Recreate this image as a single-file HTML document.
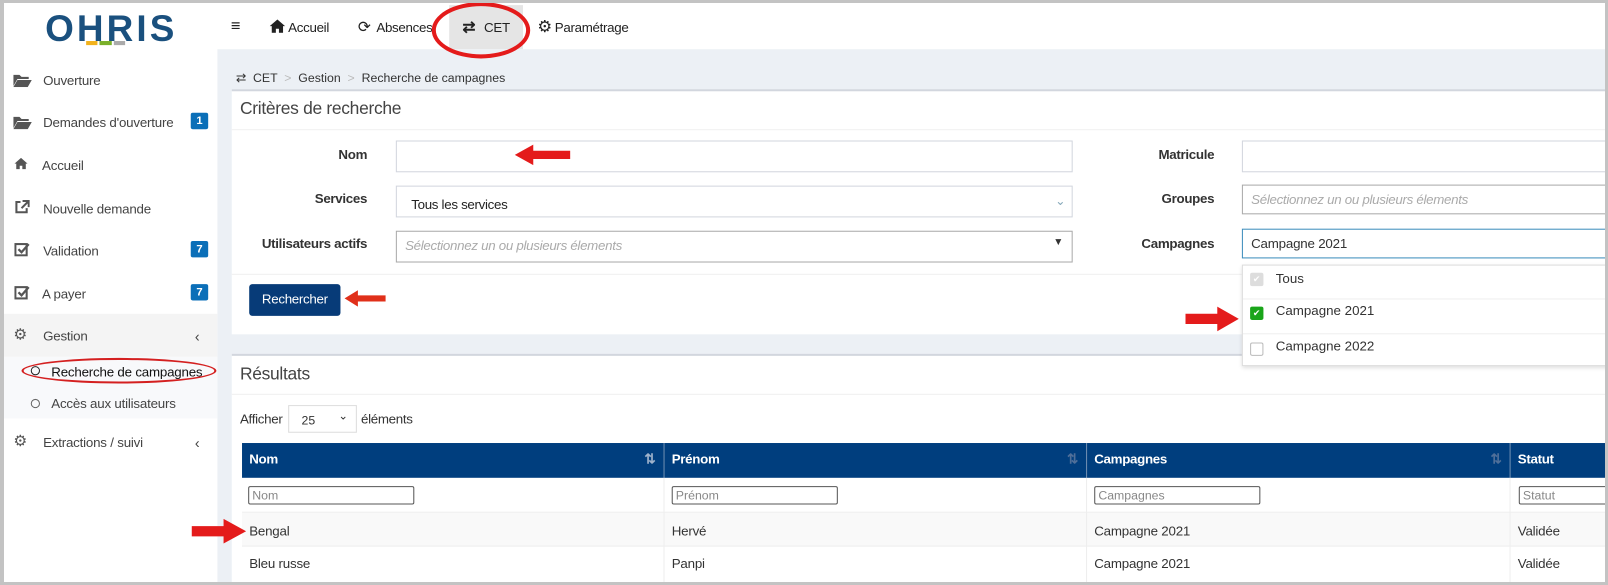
<!DOCTYPE html>
<html><head><meta charset="utf-8"><style>
*{box-sizing:border-box;margin:0;padding:0}
body{width:1608px;height:585px;overflow:hidden;background:#fff;font-family:"Liberation Sans",Arial,sans-serif;font-size:13px;color:#333;position:relative}
#w{position:absolute;left:0;top:0;width:1568px;height:570px;transform:scale(1.02551);transform-origin:0 0;overflow:hidden}
.a{position:absolute}
.frame{position:absolute;left:0;top:0;width:1608px;height:585px;border:3px solid #c3c3c3;border-left-width:4px;z-index:50;pointer-events:none}
.nav{font-size:13px;color:#222;letter-spacing:-.3px}
.side{font-size:13px;color:#444;letter-spacing:-.2px}
.badge{position:absolute;left:186px;width:17px;height:16px;background:#0b6fb8;color:#fff;font-weight:bold;font-size:11px;text-align:center;line-height:16px;border-radius:2px}
.lbl{position:absolute;font-weight:bold;font-size:13px;color:#333;text-align:right;letter-spacing:-.3px}
.inp{position:absolute;border:1px solid #d2d6de;background:#fff}
.ph{color:#aaa;font-style:italic;font-size:13px;letter-spacing:-.3px}
.th{position:absolute;top:432px;height:34px;background:#003e7e;color:#fff;font-weight:bold;line-height:32px;padding-left:7px;border-right:1px solid #6b8bb0;letter-spacing:-.3px}
.fi{position:absolute;top:474px;height:18px;border:1px solid #555;border-radius:2px;background:#fff;color:#888;font-size:12px;padding-left:3px;line-height:16px}
.td{position:absolute;letter-spacing:-.2px}
svg{display:block}
</style></head><body>
<div class="frame"></div>
<div id="w">
<!-- top bar -->
<div class="a" style="left:44px;top:7px;font-size:36px;font-weight:bold;color:#1a507e;letter-spacing:3px">OHRIS</div>
<div class="a" style="left:84px;top:40px;width:11px;height:4px;background:#f2b21b"></div>
<div class="a" style="left:97px;top:40px;width:12px;height:4px;background:#7ab02a"></div>
<div class="a" style="left:111px;top:40px;width:11px;height:4px;background:#aaa"></div>
<div class="a nav" style="left:225px;top:17px;font-size:16px;font-weight:bold">≡</div>
<svg class="a" style="left:263px;top:19px" width="15" height="13" viewBox="0 0 15 13"><path d="M7.5 0L0 6.5h2V13h4V9h3v4h4V6.5h2z" fill="#222"/></svg>
<div class="a nav" style="left:281px;top:19px">Accueil</div>
<div class="a nav" style="left:349px;top:17px;font-size:15px">⟳</div>
<div class="a nav" style="left:367px;top:19px">Absences</div>
<div class="a" style="left:438px;top:5px;width:72px;height:43px;background:#e5e5e5"></div>
<div class="a nav" style="left:451px;top:17px;font-size:15px;font-weight:bold">⇄</div>
<div class="a nav" style="left:472px;top:19px">CET</div>
<div class="a nav" style="left:524px;top:16px;font-size:16px">⚙</div>
<div class="a nav" style="left:541px;top:19px">Paramétrage</div>
<div class="a" style="left:421px;top:2px;width:96px;height:55px;border:4px solid #e41b1b;border-radius:50%;z-index:10"></div>

<div class="a" style="left:212px;top:48px;width:1396px;height:537px;background:#ecf0f5"></div>

<!-- sidebar -->
<div class="a" style="left:0;top:306px;width:212px;height:42px;background:#f4f4f4"></div>
<div class="a" style="left:0;top:348px;width:212px;height:60px;background:#f8f9fb"></div>
<svg class="a" style="left:13px;top:72px" width="18" height="13" viewBox="0 0 18 13"><path d="M0 1h6l2 2h7v2H4L0 12z M4 6h14l-4 7H0z" fill="#555"/></svg>
<div class="a side" style="left:42px;top:71px">Ouverture</div>
<svg class="a" style="left:13px;top:113px" width="18" height="13" viewBox="0 0 18 13"><path d="M0 1h6l2 2h7v2H4L0 12z M4 6h14l-4 7H0z" fill="#555"/></svg>
<div class="a side" style="left:42px;top:112px">Demandes d'ouverture</div><div class="badge" style="top:110px">1</div>
<svg class="a" style="left:14px;top:154px" width="13" height="11" viewBox="0 0 15 13"><path d="M7.5 0L0 6.5h2V13h4V9h3v4h4V6.5h2z" fill="#555"/></svg>
<div class="a side" style="left:41px;top:154px">Accueil</div>
<svg class="a" style="left:14px;top:195px" width="15" height="14" viewBox="0 0 15 14"><path d="M6 2H2v10h10V8" stroke="#555" stroke-width="2" fill="none"/><path d="M8 1h6v6M14 1L7 8" stroke="#555" stroke-width="2" fill="none"/></svg>
<div class="a side" style="left:42px;top:196px">Nouvelle demande</div>
<svg class="a" style="left:14px;top:236px" width="15" height="14" viewBox="0 0 15 14"><rect x="1" y="2" width="11" height="11" stroke="#555" stroke-width="2" fill="none"/><path d="M4 7l3 3 7-8" stroke="#555" stroke-width="2.2" fill="none"/></svg>
<div class="a side" style="left:42px;top:237px">Validation</div><div class="badge" style="top:235px">7</div>
<svg class="a" style="left:14px;top:278px" width="15" height="14" viewBox="0 0 15 14"><rect x="1" y="2" width="11" height="11" stroke="#555" stroke-width="2" fill="none"/><path d="M4 7l3 3 7-8" stroke="#555" stroke-width="2.2" fill="none"/></svg>
<div class="a side" style="left:41px;top:279px">A payer</div><div class="badge" style="top:277px">7</div>
<div class="a side" style="left:13px;top:317px;font-size:15px;color:#555">⚙</div>
<div class="a side" style="left:42px;top:320px">Gestion</div>
<div class="a side" style="left:190px;top:320px;font-size:14px">‹</div>
<div class="a" style="left:30px;top:357px;width:9px;height:9px;border:1.5px solid #222;border-radius:50%"></div>
<div class="a side" style="left:50px;top:355px;color:#111">Recherche de campagnes</div>
<div class="a" style="left:30px;top:389px;width:9px;height:9px;border:1.5px solid #666;border-radius:50%"></div>
<div class="a side" style="left:50px;top:386px">Accès aux utilisateurs</div>
<div class="a" style="left:21px;top:349px;width:190px;height:25px;border:2.5px solid #d42020;border-radius:50%"></div>
<div class="a side" style="left:13px;top:421px;font-size:15px;color:#555">⚙</div>
<div class="a side" style="left:42px;top:424px">Extractions / suivi</div>
<div class="a side" style="left:190px;top:424px;font-size:14px">‹</div>

<div class="a" style="left:230px;top:69px;font-size:12px;color:#333">⇄&nbsp; CET &nbsp;<span style="color:#bbb">&gt;</span>&nbsp; Gestion &nbsp;<span style="color:#bbb">&gt;</span>&nbsp; Recherche de campagnes</div>

<!-- box 1 -->
<div class="a" style="left:226px;top:87px;width:1382px;height:239px;background:#fff;border-top:2px solid #d2d6de"></div>
<div class="a" style="left:234px;top:96px;font-size:17px;color:#444;letter-spacing:-.3px">Critères de recherche</div>
<div class="a" style="left:226px;top:126px;width:1382px;height:1px;background:#f0f0f0"></div>
<div class="lbl" style="left:200px;width:158px;top:143px">Nom</div>
<div class="inp" style="left:386px;top:137px;width:660px;height:31px"></div>
<div class="lbl" style="left:200px;width:158px;top:186px">Services</div>
<div class="inp" style="left:386px;top:181px;width:660px;height:31px"><span class="a" style="left:14px;top:10px;font-size:13px;color:#222;letter-spacing:-.3px">Tous les services</span><span class="a" style="right:6px;top:7px;color:#8ab;font-size:12px">⌄</span></div>
<div class="lbl" style="left:200px;width:158px;top:230px">Utilisateurs actifs</div>
<div class="inp" style="left:386px;top:225px;width:660px;height:31px;border-color:#aaa"><span class="a ph" style="left:8px;top:6px">Sélectionnez un ou plusieurs élements</span><span class="a" style="right:8px;top:5px;font-size:10px;color:#333">▼</span></div>
<div class="lbl" style="left:1040px;width:144px;top:143px">Matricule</div>
<div class="inp" style="left:1211px;top:137px;width:400px;height:31px"></div>
<div class="lbl" style="left:1040px;width:144px;top:186px">Groupes</div>
<div class="inp" style="left:1211px;top:180px;width:400px;height:29px;border-color:#aaa"><span class="a ph" style="left:8px;top:6px">Sélectionnez un ou plusieurs élements</span></div>
<div class="lbl" style="left:1040px;width:144px;top:230px">Campagnes</div>
<div class="inp" style="left:1211px;top:223px;width:400px;height:29px;border-color:#3c8dbc"><span class="a" style="left:8px;top:6px;color:#333;letter-spacing:-.2px">Campagne 2021</span></div>
<div class="a" style="left:226px;top:267px;width:985px;height:1px;background:#f0f0f0"></div>
<div class="a" style="left:243px;top:277px;width:89px;height:31px;background:#073b78;border-radius:3px;color:#fff;text-align:center;line-height:30px;letter-spacing:-.3px">Rechercher</div>

<!-- box 2 -->
<div class="a" style="left:226px;top:345px;width:1382px;height:240px;background:#fff;border-top:2px solid #d2d6de"></div>
<div class="a" style="left:234px;top:355px;font-size:17px;color:#444;letter-spacing:-.3px">Résultats</div>
<div class="a" style="left:226px;top:384px;width:1382px;height:1px;background:#f0f0f0"></div>
<div class="a" style="left:234px;top:401px;letter-spacing:-.3px">Afficher</div>
<div class="a" style="left:281px;top:395px;width:67px;height:27px;border:1px solid #ddd"><span class="a" style="left:12px;top:7px;font-size:12px">25</span><span class="a" style="left:48px;top:3px;font-size:11px">⌄</span></div>
<div class="a" style="left:352px;top:401px;letter-spacing:-.3px">éléments</div>

<div class="th" style="left:236px;width:412px">Nom<span class="a" style="right:8px;top:0;color:#9fb3cc">⇅</span></div>
<div class="th" style="left:648px;width:412px">Prénom<span class="a" style="right:8px;top:0;color:#4f6f99">⇅</span></div>
<div class="th" style="left:1060px;width:413px">Campagnes<span class="a" style="right:8px;top:0;color:#4f6f99">⇅</span></div>
<div class="th" style="left:1473px;width:135px;border:none">Statut</div>
<div class="a" style="left:236px;top:466px;width:1372px;height:34px;background:#fff;border-bottom:1px solid #eee"></div>
<div class="a" style="left:236px;top:500px;width:1372px;height:33px;background:#f9f9f9;border-bottom:1px solid #eee"></div>
<div class="a" style="left:647px;top:466px;width:1px;height:119px;background:#eee"></div>
<div class="a" style="left:1059px;top:466px;width:1px;height:119px;background:#eee"></div>
<div class="a" style="left:1472px;top:466px;width:1px;height:119px;background:#eee"></div>
<div class="fi" style="left:242px;width:162px">Nom</div>
<div class="fi" style="left:655px;width:162px">Prénom</div>
<div class="fi" style="left:1067px;width:162px">Campagnes</div>
<div class="fi" style="left:1481px;width:140px">Statut</div>
<div class="td" style="left:243px;top:510px">Bengal</div>
<div class="td" style="left:655px;top:510px">Hervé</div>
<div class="td" style="left:1067px;top:510px">Campagne 2021</div>
<div class="td" style="left:1480px;top:510px">Validée</div>
<div class="td" style="left:243px;top:542px">Bleu russe</div>
<div class="td" style="left:655px;top:542px">Panpi</div>
<div class="td" style="left:1067px;top:542px">Campagne 2021</div>
<div class="td" style="left:1480px;top:542px">Validée</div>

<!-- dropdown -->
<div class="a" style="left:1211px;top:258px;width:400px;height:99px;background:#fff;border:1px solid #ddd;box-shadow:0 2px 4px rgba(0,0,0,.15);z-index:5">
 <div class="a" style="left:7px;top:7px;width:13px;height:13px;background:#ddd;border-radius:2px;color:#fff;font-size:9px;text-align:center;line-height:13px">✔</div>
 <div class="a" style="left:32px;top:5px">Tous</div>
 <div class="a" style="left:0;top:32px;width:400px;height:1px;background:#eee"></div>
 <div class="a" style="left:7px;top:40px;width:13px;height:13px;background:#1aa51a;border-radius:2px;color:#fff;font-size:9px;text-align:center;line-height:13px">✔</div>
 <div class="a" style="left:32px;top:36px">Campagne 2021</div>
 <div class="a" style="left:0;top:66px;width:400px;height:1px;background:#eee"></div>
 <div class="a" style="left:7px;top:75px;width:13px;height:13px;border:1px solid #bbb;border-radius:2px"></div>
 <div class="a" style="left:32px;top:71px">Campagne 2022</div>
</div>

<svg class="a" style="left:500px;top:140px;z-index:20" width="58" height="22" viewBox="0 0 58 22"><path d="M2 11L20 1v6h36v8H20v6z" fill="#e41b1b"/></svg>
<svg class="a" style="left:334px;top:282px;z-index:20" width="44" height="18" viewBox="0 0 44 18"><path d="M2 9L15 1v5h27v6H15v5z" fill="#e0301a"/></svg>
<svg class="a" style="left:1155px;top:298px;z-index:20" width="55" height="26" viewBox="0 0 55 26"><path d="M53 13L32 1v7H1v10h31v7z" fill="#e41b1b"/></svg>
<svg class="a" style="left:186px;top:505px;z-index:20" width="56" height="26" viewBox="0 0 56 26"><path d="M54 13L32 1v7H1v10h31v7z" fill="#e41b1b"/></svg>
</div>
</body></html>
